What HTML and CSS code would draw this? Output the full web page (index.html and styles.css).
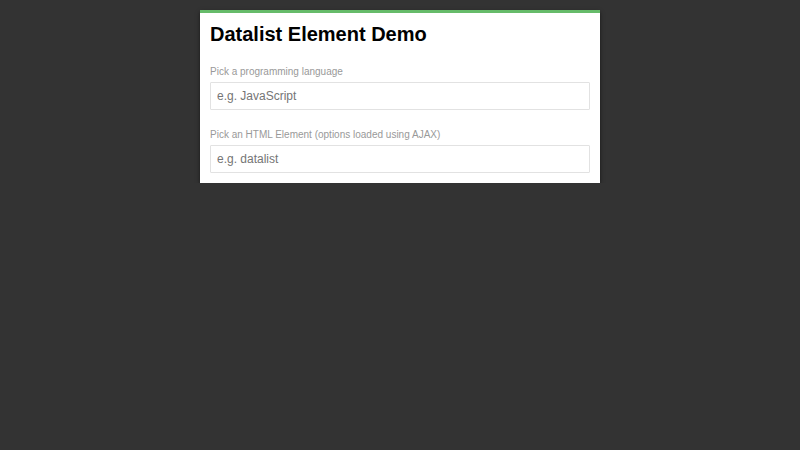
FILE: index.html
```html
<!DOCTYPE html>
<html lang="en">
<head>
<meta charset="utf-8">
<title>Datalist Element Demo</title>
<link rel="stylesheet" href="styles.css">
</head>
<body>
  <main class="card">
    <h1 class="title">Datalist Element Demo</h1>
    <div class="field">
      <label class="label" for="lang">Pick a programming language</label>
      <input class="input" id="lang" type="text" list="languages" placeholder="e.g. JavaScript">
      <datalist id="languages">
        <option value="JavaScript"></option>
        <option value="Python"></option>
      </datalist>
    </div>
    <div class="field">
      <label class="label" for="el">Pick an HTML Element (options loaded using AJAX)</label>
      <input class="input" id="el" type="text" list="elements" placeholder="e.g. datalist">
      <datalist id="elements"></datalist>
    </div>
  </main>
</body>
</html>
```
FILE: styles.css
```css
html, body {
  margin: 0;
  padding: 0;
  background: #333333;
  font-family: "Liberation Sans", Arial, sans-serif;
}

body {
  padding-top: 10px;
}

.card {
  width: 400px;
  box-sizing: border-box;
  margin: 0 auto;
  background: #ffffff;
  border-top: 3px solid #66bb6a;
  padding: 9px 10px 10px;
  box-shadow: 0 2px 4px rgba(0, 0, 0, 0.55);
}

.title {
  margin: 0;
  font-size: 20px;
  line-height: 25px;
  font-weight: bold;
  color: #000000;
}

.field {
  margin-top: 18px;
  display: flex;
  flex-direction: column;
  gap: 3px;
}

.label {
  font-size: 10px;
  line-height: 14px;
  color: #999999;
}

.input {
  display: block;
  width: 100%;
  box-sizing: border-box;
  margin: 0;
  height: 28px;
  padding: 6px 6px;
  font-family: "Liberation Sans", Arial, sans-serif;
  font-size: 12px;
  line-height: 14px;
  color: #333333;
  background: #ffffff;
  border: 1px solid #e2e2e2;
  border-radius: 1px;
  outline: none;
}

.input::placeholder {
  color: #757575;
  opacity: 1;
}
```
